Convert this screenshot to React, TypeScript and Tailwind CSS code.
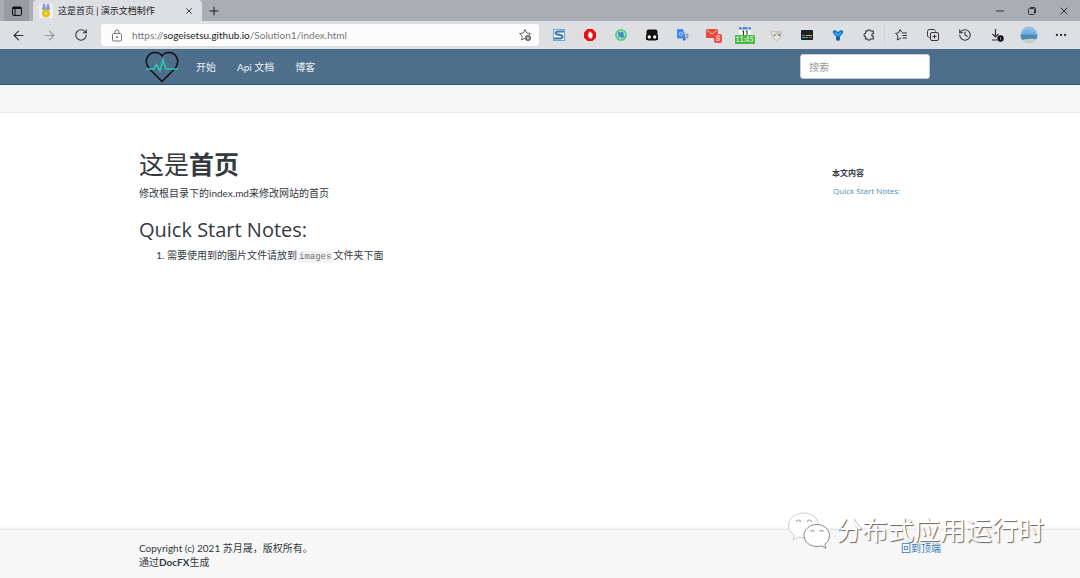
import type { ReactNode } from "react";
import {
  ArrowLeft,
  ArrowRight,
  Ellipsis,
  History,
  Minus,
  Plus,
  RotateCw,
  X,
} from "lucide-react";

interface ToolProps {
  label: string;
  children: ReactNode;
}

const Tool = ({ label, children }: ToolProps) => (
  <button
    type="button"
    aria-label={label}
    className="flex h-6 w-[31px] shrink-0 items-center justify-center text-[#333]"
  >
    {children}
  </button>
);

const TabStrip = () => (
  <div className="flex h-[21px] bg-[#a9adb4] text-[#222]">
    <button
      type="button"
      aria-label="Tab actions"
      className="ml-1 flex w-[25px] items-center justify-center bg-[#979ba2]"
    >
      <svg viewBox="0 0 12 12" className="h-3 w-3" fill="none" stroke="#111">
        <rect x="1.5" y="2" width="9" height="8.5" rx="1.5" />
        <path d="M1.5 3h9" strokeWidth="2" />
        <path d="M4 4v6" />
      </svg>
    </button>
    <div className="ml-1 flex w-[169px] items-center rounded-t bg-[#dddfe3] pr-2 pl-1.5">
      <svg viewBox="0 0 14 14" className="h-3.5 w-3.5">
        <rect width="14" height="14" fill="#eeeef3" />
        <path d="M4 0h2l1 5 1-5h2l1 6H3z" fill="#8b95d8" />
        <circle cx="7" cy="9.5" r="4" fill="#e5c51d" />
        <circle cx="7" cy="9.5" r="2" fill="#fae95c" stroke="#bd9c18" strokeWidth=".6" />
      </svg>
      <span className="ml-[5px] flex-1 text-[9px] whitespace-nowrap">这是首页 | 演示文档制作</span>
      <button type="button" aria-label="Close tab">
        <X className="h-2.5 w-2.5" />
      </button>
    </div>
    <button type="button" aria-label="New tab" className="ml-1 px-px">
      <Plus className="h-3.5 w-3.5" strokeWidth={1.8} />
    </button>
    <div className="ml-auto flex">
      <button type="button" aria-label="Minimize" className="flex w-8 items-center justify-center">
        <Minus className="h-3 w-3" strokeWidth={1.8} />
      </button>
      <button type="button" aria-label="Restore" className="flex w-8 items-center justify-center">
        <svg viewBox="0 0 10 10" className="h-2.5 w-2.5" fill="none" stroke="#333">
          <rect x="1.5" y="2.5" width="6" height="6" rx="1" />
          <path d="M3 1.500h4a1.500 1.500 0 0 1 1.500 1.500v4" />
        </svg>
      </button>
      <button type="button" aria-label="Close" className="flex w-8 items-center justify-center">
        <X className="h-3 w-3" strokeWidth={1.8} />
      </button>
    </div>
  </div>
);

const AddressBar = () => (
  <div className="flex h-[22px] min-w-0 flex-1 items-center rounded-[3px] bg-[#fcfcfc] pr-[7px] pl-2.5">
    <svg viewBox="0 0 12 13" className="h-[13px] w-3" fill="none" stroke="#777">
      <rect x="1.5" y="4.5" width="9" height="7.5" rx="1" />
      <path d="M4 4.5V3a2 2 0 0 1 4 0v1.5" />
      <circle cx="6" cy="8.2" r=".6" fill="#777" />
    </svg>
    <span className="ml-[9px] flex-1 text-[10px] whitespace-nowrap text-[#777]">
      https://<span className="text-[#222]">sogeisetsu.github.io</span>/Solution1/index.html
    </span>
    <button type="button" aria-label="Add to favorites">
      <svg viewBox="0 0 14 14" className="h-3.5 w-3.5" fill="none" stroke="#666">
        <path d="M7 10.2 3.6 12l.7-3.8L1.500 5.500l3.800-.5L7 1.500l1.700 3.500 3.800.5-1.600 1.500" />
        <circle cx="10" cy="10" r="3" fill="#666" stroke="none" />
        <path d="M8.500 10h3M10 8.500v3" stroke="#fff" strokeWidth=".7" />
      </svg>
    </button>
  </div>
);

const Toolbar = () => (
  <div className="flex h-7 items-center bg-[#dddfe3] pr-1 pl-[3px]">
    <Tool label="Back">
      <ArrowLeft className="h-[15px] w-[15px]" strokeWidth={1.8} />
    </Tool>
    <Tool label="Forward">
      <ArrowRight className="h-[15px] w-[15px] text-[#999]" strokeWidth={1.8} />
    </Tool>
    <Tool label="Refresh">
      <RotateCw className="h-3.5 w-3.5" strokeWidth={1.8} />
    </Tool>
    <div className="ml-[5px] flex min-w-0 flex-1">
      <AddressBar />
    </div>
    <div className="ml-1 flex">
      <Tool label="Stylus">
        <svg viewBox="0 0 12 12" className="h-3 w-3" fill="none">
          <rect x=".5" y=".5" width="11" height="11" fill="#f6fafc" stroke="#74a5c8" />
          <path d="M11 2.500H5C2 2.500 2 5.200 4.500 5.600l3 .5c2.800.5 2.500 3.400-.5 3.400H1" stroke="#3579ad" strokeWidth="2" />
        </svg>
      </Tool>
      <Tool label="Ad blocker">
        <svg viewBox="0 0 12 12" className="h-3 w-3">
          <path d="M3.500 0h5L12 3.500v5L8.500 12h-5L0 8.500v-5z" fill="#f00c0c" />
          <path d="M3.500 6 4.500 6.500V3.500h1V2.500h1v.8h1v1h1V8L7.500 9.500h-2z" fill="#fff" />
        </svg>
      </Tool>
      <Tool label="Proxy">
        <svg viewBox="0 0 12 12" className="h-3 w-3">
          <circle cx="6" cy="6" r="5.200" fill="#a7dfc0" stroke="#35cf75" strokeWidth="1.300" />
          <path d="m3 2.500 2 1 2-1 2 2-.5 1.500L10 8l-2 .5L7 10 5.500 7.500 3 9l.5-3z" fill="#4390bd" />
        </svg>
      </Tool>
      <Tool label="Tampermonkey">
        <svg viewBox="0 0 12 12" className="h-3 w-3">
          <rect x=".5" y=".5" width="11" height="11" rx="2" fill="#111" />
          <path d="M0 6h12v5H0z" fill="#111" />
          <circle cx="3.300" cy="8" r="1.700" fill="#f2f2f2" />
          <circle cx="8.700" cy="8" r="1.700" fill="#f2f2f2" />
        </svg>
      </Tool>
      <Tool label="Translate">
        <svg viewBox="0 0 12 12" className="h-3 w-3" fill="none">
          <path d="M6 3h5.500v8.500H8z" fill="#d0d3d8" />
          <path d="M0 0h6l3 9.500H1a1 1 0 0 1-1-1z" fill="#4487ef" />
          <path d="M5.500 9.500H9L7 12z" fill="#2554b5" />
          <circle cx="4" cy="4.800" r="1.600" stroke="#cfe0ff" strokeWidth=".8" />
          <path d="M8.500 5.500h3M10 5v1M11 6c-.3 1.500-1 2-1.500 2.500M9.500 7l1.500 2" stroke="#777" strokeWidth=".7" />
        </svg>
      </Tool>
      <Tool label="Mail, 8 unread">
        <span className="relative block h-3 w-[15px]">
          <svg viewBox="0 0 14 12" className="h-3 w-3.5" fill="none">
            <rect y="0" width="12" height="9" fill="#e14b40" />
            <path d="m0 .5 6 4.500L12 .5" stroke="#f3bdb8" />
          </svg>
          <span className="absolute top-[5px] left-2 h-[9px] w-2 rounded-[2px] bg-[#e94e3e] text-center text-[7px] leading-[9px] text-white">
            8
          </span>
        </span>
      </Tool>
      <Tool label="Clock">
        <span className="relative block h-4 w-5">
          <svg viewBox="0 0 12 10" className="mx-auto h-2.5 w-3">
            <path d="M0 1h12v9H0z" fill="#f7f7f7" />
            <path d="M0 0h12v2.500H0z" fill="#4f8fca" />
            <path d="M2.500 0h1v1.500h-1zM8.500 0h1v1.500h-1z" fill="#fff" />
            <path d="m3.500 4.500 1-.8V8M7 4.500l1-.8V8" stroke="#333" fill="none" />
          </svg>
          <span className="absolute top-2 left-0 h-[9px] w-5 rounded-[1px] bg-[#49b944] text-center text-[7px] leading-[9px] text-white">
            11:45
          </span>
        </span>
      </Tool>
      <Tool label="Cat">
        <svg viewBox="0 0 12 12" className="h-3 w-3">
          <path d="m0 1 3 1h5l3.500-1L12 6l-2 4.500L6.500 12 3 9.500 1 6z" fill="#c8c6bf" />
          <path d="M2 3h3l1 3h4l-1 4-3 1-2-3z" fill="#e9e7e1" />
          <path d="M4 5.500h1.500v1.500H4zM8.500 5.500H10v1.500H8.500z" fill="#56616a" />
          <path d="m7 9 1-.3.300.8z" fill="#d7938d" />
        </svg>
      </Tool>
      <Tool label="Subtitles">
        <svg viewBox="0 0 12 10" className="h-2.5 w-3">
          <rect width="12" height="10" rx=".8" fill="#15232b" />
          <path d="M1 5.500h3M8 7.500h3" stroke="#d55e4c" />
          <path d="M5 5.500h6" stroke="#e0a84b" />
          <path d="M1 7.500h6" stroke="#52a6ad" />
        </svg>
      </Tool>
      <Tool label="Download helper">
        <svg viewBox="0 0 12 12" className="h-3 w-3">
          <path d="M.8 3C.8.800 3.500.800 6 3c2.500-2.200 5.200-2.200 5.200 0 0 1.200-1.700 2.800-3.200 4.500V11c0 1-4 1-4 0V7.500C2.500 5.800.8 4.200.8 3z" fill="#1674cb" />
          <path d="m3 3.500 3 2.800 3-2.800" stroke="#47bcf1" fill="none" strokeWidth="1.200" />
          <path d="M6 8v3" stroke="#0b4189" />
        </svg>
      </Tool>
      <Tool label="Extensions">
        <svg viewBox="0 0 12 12" className="h-3 w-3" fill="none" stroke="currentColor" strokeWidth="1.100">
          <path d="M3 2h1.500c0-1.600 3-1.600 3 0h2.800v2.600c-2 0-2 2.800 0 2.800V10H7.500c0 1.600-3 1.600-3 0H2.500V7.500C.5 7.500.5 4.500 2.500 4.500z" />
        </svg>
      </Tool>
    </div>
    <div className="flex gap-px border-l border-[#d3d6d9]">
      <Tool label="Favorites">
        <svg viewBox="0 0 14 14" className="h-3.5 w-3.5" fill="none" stroke="currentColor">
          <path d="m8 4.500-2-3-1.500 3.300L1.500 5.500 4 8l-.7 4L7 10" />
          <path d="M8 5h5M8.500 7.500H13M8.500 10H13" />
        </svg>
      </Tool>
      <Tool label="Collections">
        <svg viewBox="0 0 14 14" className="h-3.5 w-3.5" fill="none" stroke="currentColor">
          <rect x="4.500" y="4.500" width="8" height="8" rx="1.500" />
          <path d="M3.500 9.500C1.500 9 1.500 8 1.500 7V3.500a2 2 0 0 1 2-2H7c1.500 0 2 .5 2.500 2M8.500 6.500v4M6.500 8.500h4" />
        </svg>
      </Tool>
      <Tool label="History">
        <History className="h-3.5 w-3.5" strokeWidth={1.8} />
      </Tool>
      <Tool label="Downloads">
        <svg viewBox="0 0 14 14" className="h-3.5 w-3.5" fill="none" stroke="currentColor">
          <path d="M5.500 1v8M2.500 6l3 3 3-3M2 12h5" strokeWidth="1.200" />
          <circle cx="10.500" cy="10.500" r="3.200" fill="#111" stroke="none" />
          <path d="M10.500 9v3" stroke="#bbb" strokeWidth=".7" />
        </svg>
      </Tool>
      <Tool label="Profile">
        <svg viewBox="0 0 18 18" className="h-[18px] w-[18px]">
          <clipPath id="avatar">
            <circle cx="9" cy="9" r="8.500" />
          </clipPath>
          <g clipPath="url(#avatar)">
            <path d="M0 0h18v9H0z" fill="#8fbfe8" />
            <path d="M2 6q5-4 13 0v3H2z" fill="#77afe0" />
            <path d="M0 8.500h18V14H0z" fill="#4a8db3" />
            <path d="M0 14.500q9-3 18-1V18H0z" fill="#c6cdd0" />
          </g>
        </svg>
      </Tool>
      <Tool label="Settings">
        <Ellipsis className="h-3.5 w-3.5" />
      </Tool>
    </div>
  </div>
);

const Logo = () => (
  <svg viewBox="0 0 34 32" className="h-8 w-[34px]" fill="none">
    <path
      d="M17 30.500 4 17.500C-2 10 3 1.500 10 1.500c3 0 5.500 1 7 3.500 1.500-2.500 4-3.500 7-3.500 7 0 12 8.500 6 16z"
      stroke="#111"
      strokeWidth="1.600"
      strokeLinejoin="round"
    />
    <path d="M1 18h8l2.500-4.500 3.500 6L18 9l3 9h12" stroke="#2bcbb0" strokeWidth="1.500" />
  </svg>
);

const Watermark = () => (
  <div className="pointer-events-none absolute -top-[19px] right-9 flex items-center gap-[5px]">
    <svg viewBox="0 0 44 38" className="h-[38px] w-11" stroke="#aaa">
      <g fill="#fff">
        <path d="M17 2C8 2 1.500 7.500 1.500 14.500c0 4 2 7.500 6 9.800L6 29l5.500-3c2 .6 4 .8 6 .7 8-.5 14-5.500 14-12.200C31.500 7.500 25 2 17 2z" strokeWidth=".6" />
        <path d="M30 13.500c-7.500 0-13 5-13 11s5.500 11 13 11c1.500 0 3-.2 4.500-.6l4.500 2.300-1.200-4c3-2 4.700-5.200 4.700-8.700 0-6-5.500-11-12.500-11z" stroke="#888" />
      </g>
      <g fill="none" strokeWidth="1.200">
        <path d="M9.500 11a2 2 0 0 1 4 0M20.500 11a2 2 0 0 1 4 0M24 21a1.600 1.600 0 0 1 3.200 0M33 21a1.600 1.600 0 0 1 3.200 0" />
      </g>
    </svg>
    <span className="text-[26px] leading-[38px] whitespace-nowrap text-white [text-shadow:1px_1px_1px_#666]">
      分布式应用运行时
    </span>
  </div>
);

export default function App() {
  return (
    <div className="flex min-h-screen flex-col bg-white font-['Lato','Noto_Sans_CJK_SC',sans-serif] text-[10px] leading-[14px] text-[#34393e]">
      <TabStrip />
      <Toolbar />
      <header>
        <div className="border-b border-[#235b7f] bg-[#4d6f8c]">
          <div className="mx-auto flex h-[35px] max-w-[802px] items-center">
            <a href="#" aria-label="Home" className="ml-1.5">
              <Logo />
            </a>
            <nav className="ml-[17px] flex gap-[21px] text-[#eef2f5]">
              <a href="#start">开始</a>
              <a href="#api">Api 文档</a>
              <a href="#blog">博客</a>
            </nav>
            <input
              type="search"
              aria-label="搜索"
              placeholder="搜索"
              className="mr-[11px] ml-auto h-[25px] w-[130px] rounded-[3px] border border-[#c4ccd3] bg-white px-2 outline-none placeholder:text-[#999]"
            />
          </div>
        </div>
        <div className="h-7 border-b border-[#e9e9e9] bg-[#f7f7f7]" />
      </header>

      <main className="mx-auto flex w-full max-w-[802px] flex-1 justify-between">
        <article className="pt-9">
          <h1 className="text-[25px] leading-[30px]">
            这是<strong>首页</strong>
          </h1>
          <p className="mt-[7px]">修改根目录下的index.md来修改网站的首页</p>
          <h2 className="mt-4 font-['Open_Sans',sans-serif] text-[20px] leading-7">
            Quick Start Notes:
          </h2>
          <ol className="mt-1 list-decimal pl-7">
            <li>
              需要使用到的图片文件请放到
              <code className="rounded-[3px] bg-[#f2f3f4] px-0.5 py-px font-['Liberation_Mono',monospace] text-[9px] text-[#717374]">
                images
              </code>
              文件夹下面
            </li>
          </ol>
        </article>
        <aside className="w-[109px] pt-[53px] text-[8px]">
          <h5 className="font-bold">本文内容</h5>
          <a
            href="#quick-start"
            className="mt-1 ml-px block font-['Open_Sans',sans-serif] text-[#4a8bc5]"
          >
            Quick Start Notes:
          </a>
        </aside>
      </main>

      <footer className="relative border-t border-[#e7e7e7] bg-[#f7f7f7] shadow-[0_-1px_2px_#eee]">
        <Watermark />
        <div className="relative mx-auto flex max-w-[802px] justify-between pt-[11px] pb-[9px]">
          <div>
            <p>Copyright (c) 2021 苏月晟，版权所有。</p>
            <p>
              通过<strong>DocFX</strong>生成
            </p>
          </div>
          <a href="#" className="text-[#387bb5]">
            回到顶端
          </a>
        </div>
      </footer>
    </div>
  );
}
